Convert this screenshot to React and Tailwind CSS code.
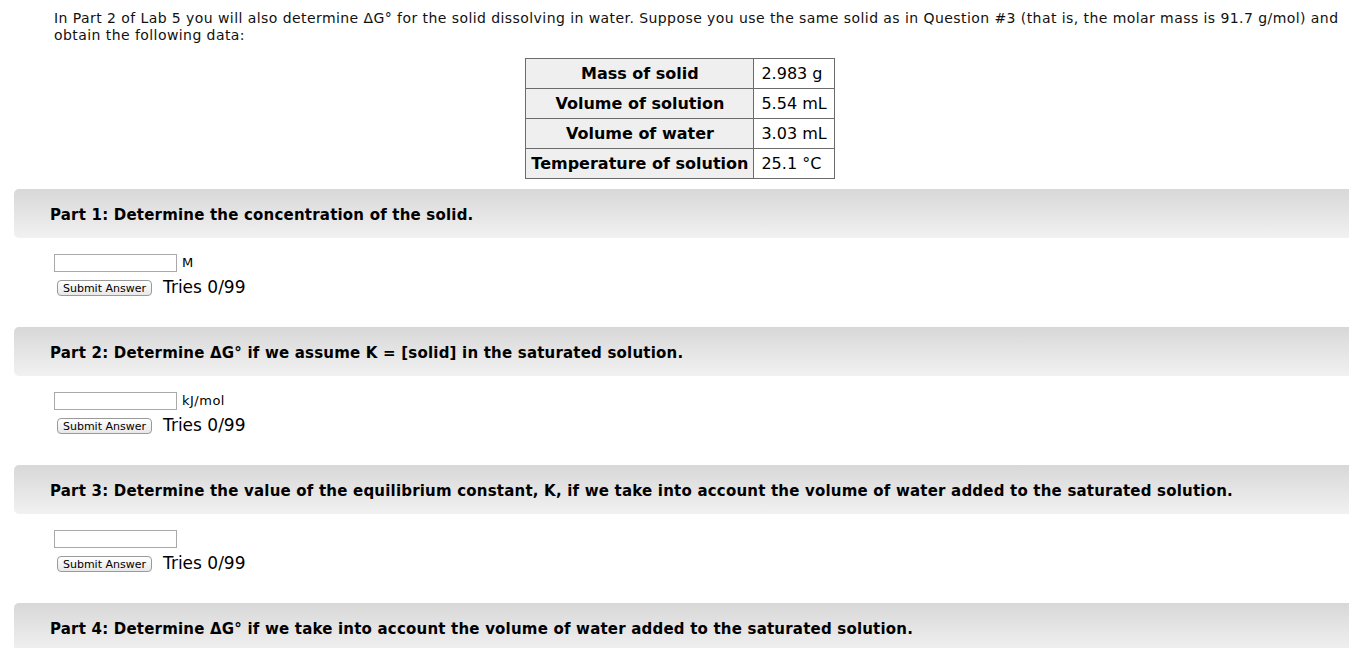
import React from "react";

const rows = [
  ["Mass of solid", "2.983 g"],
  ["Volume of solution", "5.54 mL"],
  ["Volume of water", "3.03 mL"],
  ["Temperature of solution", "25.1 °C"],
];

const parts = [
  { title: "Part 1: Determine the concentration of the solid.", unit: "M" },
  { title: "Part 2: Determine ΔG° if we assume K = [solid] in the saturated solution.", unit: "kJ/mol" },
  { title: "Part 3: Determine the value of the equilibrium constant, K, if we take into account the volume of water added to the saturated solution.", unit: "" },
  { title: "Part 4: Determine ΔG° if we take into account the volume of water added to the saturated solution.", unit: null },
];

function Part({ title, unit }) {
  return (
    <div>
      <div className="ml-[14px] h-[49px] rounded-l-[5px] bg-gradient-to-b from-[#d8d8d8] to-[#f1f1f1] flex items-center pl-[36px] pt-[3px]">
        <span className="font-bold text-[15px] tracking-[0.2px] text-black whitespace-nowrap">{title}</span>
      </div>
      {unit !== null && (
        <div className="pl-[54px] pt-[16px] pb-[31px]">
          <div className="flex items-center h-[18px]">
            <input
              type="text"
              className="w-[123px] h-[18px] border border-[#a9a9a9] bg-white outline-none"
            />
            <span className="ml-[5px] text-[13px] tracking-[0.5px] text-black">{unit}</span>
          </div>
          <div className="flex items-center mt-[8px] h-[16px]">
            <button className="ml-[3px] h-[16px] w-[95px] rounded-[4px] border border-[#9a9a9a] bg-gradient-to-b from-white to-[#e8e8e8] text-[11px] leading-none text-black flex items-center justify-center">
              Submit Answer
            </button>
            <span className="ml-[11px] text-[17px] text-black">Tries 0/99</span>
          </div>
        </div>
      )}
    </div>
  );
}

export default function App() {
  return (
    <div className="w-[1349px] h-[648px] overflow-hidden bg-white text-black" style={{ fontFamily: '"DejaVu Sans", Verdana, sans-serif' }}>
      <div className="pl-[54px] pr-[8px] pt-[10px] text-[14px] tracking-[0.43px] leading-[17px] text-[#111]">
        In Part 2 of Lab 5 you will also determine ΔG° for the solid dissolving in water. Suppose you use the same solid as in Question #3 (that is, the molar mass is 91.7 g/mol) and obtain the following data:
      </div>
      <div className="flex justify-center mt-[14px] mb-[10px] pl-[11px]">
        <table className="border-collapse border border-[#6b6b6b]">
          <tbody>
            {rows.map(([k, v]) => (
              <tr key={k} className="h-[30px]">
                <td className="border border-[#6b6b6b] bg-[#efefef] font-bold text-[16px] text-center px-[5px] w-[228px] whitespace-nowrap">{k}</td>
                <td className="border border-[#6b6b6b] text-[16px] px-[7px] w-[80px] whitespace-nowrap">{v}</td>
              </tr>
            ))}
          </tbody>
        </table>
      </div>
      {parts.map((p) => (
        <Part key={p.title} {...p} />
      ))}
    </div>
  );
}
